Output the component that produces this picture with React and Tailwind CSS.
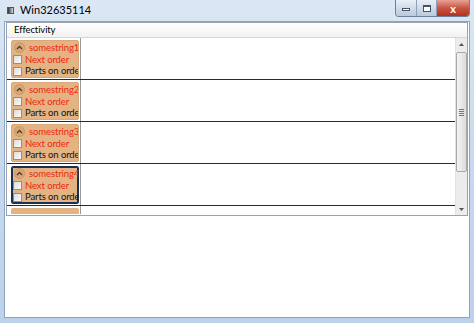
import React from "react";

const rows = ["somestring1", "somestring2", "somestring3", "somestring4"];

function Chevron() {
  return (
    <span className="w-[11px] h-[11px] rounded-full bg-[#d9a676] border border-[#c99868] flex items-center justify-center shrink-0">
      <svg width="7" height="5" viewBox="0 0 7 5">
        <path d="M1 4 L3.5 1.5 L6 4" fill="none" stroke="#4a3a2a" strokeWidth="1.3" />
      </svg>
    </span>
  );
}

function Check() {
  return (
    <span className="w-[9px] h-[9px] border border-[#8f8f8f] bg-gradient-to-br from-[#dcdcdc] to-[#fbfbfb] shrink-0" />
  );
}

function Row({ label, selected }) {
  return (
    <div className="flex h-[42px] border-b-[1.5px] border-[#2a2a2a] shrink-0">
      <div className="w-[74px] pl-[4px] pr-[1px] pt-[2px] pb-[1px] border-r border-[#9a9a9a]">
        <div
          className={
            "h-full rounded-[2px] bg-[#e3b384] flex flex-col overflow-hidden whitespace-nowrap pl-[1px] border " +
            (selected ? "border-[#1b2f52] ring-1 ring-inset ring-[#1b2f52]" : "border-[#d7a878]")
          }
        >
          <div className="flex items-center gap-[4px] h-[13px] pl-[1px]">
            <Chevron />
            <span className="text-[#f2260e] leading-none">{label}</span>
          </div>
          <div className="flex items-center gap-[3px] h-[12px]">
            <Check />
            <span className="text-[#f2260e] leading-none">Next order</span>
          </div>
          <div className="flex items-center gap-[3px] h-[12px]">
            <Check />
            <span className="text-[#111] leading-none">Parts on order</span>
          </div>
        </div>
      </div>
      <div className="flex-1 bg-white" />
    </div>
  );
}

export default function App() {
  return (
    <div
      className="w-[474px] h-[323px] bg-gradient-to-b from-[#dbe7f4] via-[#c7d9ee] to-[#bcd1ea] flex flex-col overflow-hidden"
      style={{ fontFamily: 'Lato, "Liberation Sans", sans-serif' }}
    >
      <div className="h-[21px] flex items-start shrink-0">
        <div className="flex items-center h-[20px] pl-[7px] gap-[6px]">
          <span className="w-[7px] h-[7px] border border-[#555] bg-gradient-to-r from-[#333] to-[#ddd]" />
          <span className="text-[11px] text-black">Win32635114</span>
        </div>
        <div className="ml-auto mr-[4px] flex h-[17px] rounded-b-[4px] border border-t-0 border-[#6f7f96] overflow-hidden">
          <div className="w-[21px] bg-gradient-to-b from-[#e9eff7] to-[#b9c9dd] flex items-center justify-center border-r border-[#8fa0b6]">
            <span className="w-[8px] h-[3px] bg-white border border-[#44546a] mt-[3px]" />
          </div>
          <div className="w-[20px] bg-gradient-to-b from-[#e9eff7] to-[#b9c9dd] flex items-center justify-center border-r border-[#8fa0b6]">
            <span className="w-[8px] h-[7px] bg-white border border-[#44546a] border-t-2" />
          </div>
          <div className="w-[32px] bg-gradient-to-b from-[#e8a195] via-[#c75544] to-[#b4301c] flex items-center justify-center">
            <span className="text-white text-[11px] font-bold leading-none">x</span>
          </div>
        </div>
      </div>
      <div className="mx-[4px] mb-[5px] flex-1 bg-white border border-[#8ea4be] flex flex-col">
        <div className="mx-[1px] h-[194px] border border-[#9aa3ad] flex flex-col text-[9.5px] tracking-[-0.1px]">
          <div className="h-[15px] shrink-0 flex items-center pl-[7px] bg-gradient-to-b from-white to-[#f2f2f2] border-b border-[#d5d5d5] text-black">
            Effectivity
          </div>
          <div className="flex-1 flex overflow-hidden">
            <div className="flex-1 flex flex-col overflow-hidden">
              {rows.map((r, i) => (
                <Row key={r} label={r} selected={i === 3} />
              ))}
              <div className="flex h-[8px] shrink-0">
                <div className="w-[74px] pl-[4px] pr-[1px] pt-[2px] border-r border-[#9a9a9a]">
                  <div className="h-full rounded-t-[2px] bg-[#e3b384]" />
                </div>
              </div>
            </div>
            <div className="w-[12px] bg-[#ececec] border-l border-[#e2e2e2] flex flex-col items-center">
              <div className="h-[12px] flex items-center justify-center">
                <svg width="5" height="3" viewBox="0 0 5 3">
                  <path d="M0 3 L2.5 0 L5 3 Z" fill="#555" />
                </svg>
              </div>
              <div className="mt-[2px] w-[11px] h-[120px] rounded-[2px] border border-[#a8a8a8] bg-gradient-to-r from-[#f3f3f3] to-[#dcdcdc] flex items-center justify-center">
                <div className="flex flex-col gap-[1px]">
                  <span className="w-[5px] h-[1px] bg-[#777]" />
                  <span className="w-[5px] h-[1px] bg-[#777]" />
                  <span className="w-[5px] h-[1px] bg-[#777]" />
                  <span className="w-[5px] h-[1px] bg-[#777]" />
                </div>
              </div>
              <div className="flex-1" />
              <div className="h-[12px] flex items-center justify-center">
                <svg width="5" height="3" viewBox="0 0 5 3">
                  <path d="M0 0 L2.5 3 L5 0 Z" fill="#555" />
                </svg>
              </div>
            </div>
          </div>
        </div>
      </div>
    </div>
  );
}
